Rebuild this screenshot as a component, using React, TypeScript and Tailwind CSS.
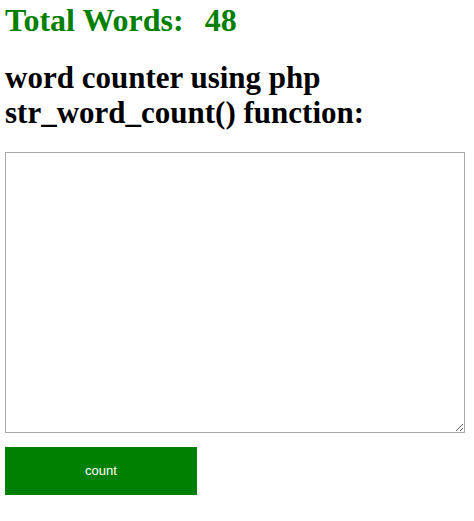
export default function App() {
  return (
    <div className="min-h-screen bg-white pl-[5px] pt-[2px]" style={{ fontFamily: '"Liberation Serif", serif' }}>
      <h1 className="text-[32px] leading-[36px] font-bold text-[#008000] whitespace-pre">
        {'Total Words:  '}
        <span className="ml-[5px]">48</span>
      </h1>
      <h2 className="mt-[22px] text-[31px] leading-[35px] font-bold text-black">
        word counter using php
        <br />
        str_word_count() function:
      </h2>
      <form className="mt-[22px] flex flex-col items-start gap-[14px]" onSubmit={(e) => e.preventDefault()}>
        <textarea className="w-[460px] h-[281px] border border-[#a9a9a9] bg-white p-[2px] text-[13px] outline-none" />
        <button
          type="submit"
          className="w-[192px] h-[48px] bg-[#008000] text-white text-[13px]"
          style={{ fontFamily: '"Liberation Sans", Arial, sans-serif' }}
        >
          count
        </button>
      </form>
    </div>
  );
}
